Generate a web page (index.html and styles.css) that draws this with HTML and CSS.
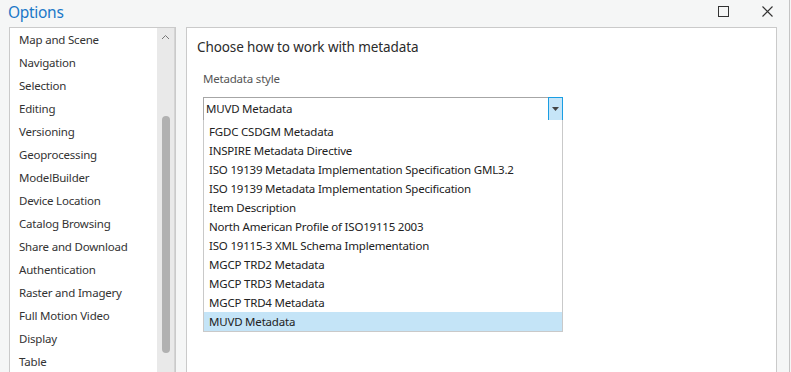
FILE: index.html
```html
<!DOCTYPE html>
<html lang="en">
<head>
    <meta charset="UTF-8">
    <title>Options</title>
    <link rel="stylesheet" href="styles.css">
</head>
<body>

<div class="window">
    <div class="titlebar">
        <span class="title">Options</span>
        <div class="controls">
            <button class="ctrl" title="Maximize">
                <svg width="11" height="11" viewBox="0 0 11 11"><rect x="0.5" y="0.5" width="10" height="10" fill="none" stroke="#333" stroke-width="1"/></svg>
            </button>
            <button class="ctrl" title="Close">
                <svg width="11" height="11" viewBox="0 0 11 11"><path d="M0.5 0.5 L10.5 10.5 M10.5 0.5 L0.5 10.5" stroke="#333" stroke-width="1.1" fill="none"/></svg>
            </button>
        </div>
    </div>

    <div class="main">
        <div class="sidebar">
            <ul class="nav">
                <li>Map and Scene</li>
                <li>Navigation</li>
                <li>Selection</li>
                <li>Editing</li>
                <li>Versioning</li>
                <li>Geoprocessing</li>
                <li>ModelBuilder</li>
                <li>Device Location</li>
                <li>Catalog Browsing</li>
                <li>Share and Download</li>
                <li>Authentication</li>
                <li>Raster and Imagery</li>
                <li>Full Motion Video</li>
                <li>Display</li>
                <li>Table</li>
            </ul>
            <div class="scrollbar">
                <svg class="scroll-up" width="9" height="6" viewBox="0 0 9 6"><path d="M1 5 L4.5 1.5 L8 5" stroke="#777" stroke-width="1" fill="none"/></svg>
                <div class="thumb"></div>
            </div>
        </div>

        <div class="content">
            <h1>Choose how to work with metadata</h1>
            <div class="field">
                <label>Metadata style</label>
                <div class="combo">
                    <div class="combo-value">MUVD Metadata</div>
                    <div class="combo-button">
                        <svg width="7" height="4" viewBox="0 0 7 4"><path d="M0 0 H7 L3.5 4 Z" fill="#444"/></svg>
                    </div>
                    <ul class="dropdown">
                        <li>FGDC CSDGM Metadata</li>
                        <li>INSPIRE Metadata Directive</li>
                        <li>ISO 19139 Metadata Implementation Specification GML3.2</li>
                        <li>ISO 19139 Metadata Implementation Specification</li>
                        <li>Item Description</li>
                        <li>North American Profile of ISO19115 2003</li>
                        <li>ISO 19115-3 XML Schema Implementation</li>
                        <li>MGCP TRD2 Metadata</li>
                        <li>MGCP TRD3 Metadata</li>
                        <li>MGCP TRD4 Metadata</li>
                        <li class="selected">MUVD Metadata</li>
                    </ul>
                </div>
            </div>
        </div>
    </div>
</div>

</body>
</html>
```

FILE: styles.css
```css
body {
    margin: 0;
    font-family: "Noto Sans", "Open Sans", sans-serif;
    font-size: 11.5px;
    letter-spacing: -0.2px;
    color: #333;
    background-color: #f5f6f6;
    overflow: hidden;
}
.window {
    width: 789px;
    height: 372px;
    border-right: 1px solid #c4c4c4;
    overflow: hidden;
}
.titlebar {
    height: 27px;
    display: flex;
    align-items: center;
    justify-content: space-between;
}
.title {
    padding-left: 8px;
    font-size: 15.5px;
    letter-spacing: -0.3px;
    color: #1b78c8;
    line-height: 24px;
    margin-top: -3px;
}
.controls {
    display: flex;
    align-items: center;
    margin-top: -4px;
    padding-right: 16px;
    gap: 33px;
}
.ctrl {
    background: none;
    border: none;
    padding: 0;
    display: flex;
    cursor: pointer;
}
.main {
    display: flex;
    gap: 10px;
    padding-left: 9px;
}
.sidebar {
    width: 165px;
    height: 360px;
    display: flex;
    background-color: white;
    border: 1px solid #cacaca;
}
.nav {
    list-style: none;
    margin: 0;
    padding: 0;
    flex: 1;
}
.nav li {
    height: 23px;
    line-height: 23px;
    padding-left: 9px;
    white-space: nowrap;
}
.scrollbar {
    width: 17px;
    background-color: #e9e9e9;
    border-right: 1px solid #d4d4d4;
    display: flex;
    flex-direction: column;
    align-items: center;
}
.scroll-up {
    margin-top: 6px;
}
.thumb {
    width: 8px;
    height: 237px;
    margin-top: 76px;
    background-color: #b1b1b1;
    border-radius: 4px;
}
.content {
    width: 591px;
    height: 360px;
    background-color: white;
    border: 1px solid #cacaca;
    padding: 10px 0 0 10px;
    box-sizing: border-box;
}
h1 {
    margin: 0;
    font-size: 13.5px;
    letter-spacing: -0.1px;
    font-weight: normal;
    color: #2b2b2b;
    line-height: 19px;
}
.field {
    padding-left: 6px;
    margin-top: 13px;
}
.field label {
    display: block;
    color: #555;
    line-height: 18px;
}
.combo {
    position: relative;
    margin-top: 9px;
    width: 360px;
    height: 24px;
    display: flex;
    box-sizing: border-box;
    border: 1px solid #a6a6a6;
}
.combo-value {
    flex: 1;
    padding-left: 2px;
    line-height: 22px;
    color: #222;
}
.combo-button {
    width: 13px;
    margin: -1px -1px -1px 0;
    border: 1px solid #1a9ee3;
    background-color: #c6e5f8;
    display: flex;
    align-items: center;
    justify-content: center;
}
.dropdown {
    position: absolute;
    top: 22px;
    left: -1px;
    width: 358px;
    margin: 0;
    padding: 2px 0 0;
    list-style: none;
    background-color: white;
    border: 1px solid #c9c9c9;
    border-top: none;
}
.dropdown li {
    height: 19px;
    line-height: 19px;
    padding-left: 5px;
    color: #222;
    white-space: nowrap;
}
.dropdown li.selected {
    background-color: #c4e4f7;
}
```
